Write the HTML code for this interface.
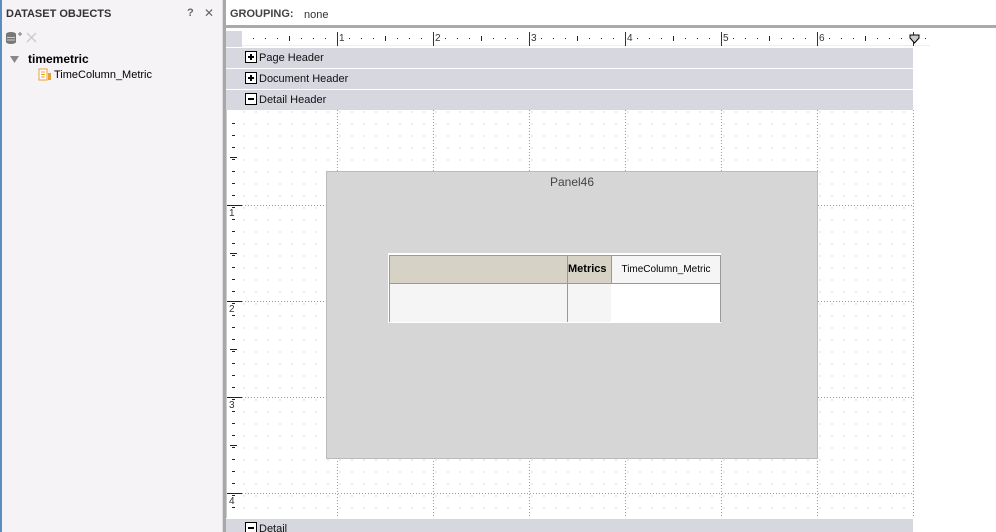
<!DOCTYPE html>
<html style="overflow:hidden;width:996px;height:532px"><head><style>
*{margin:0;padding:0;box-sizing:border-box}
body{width:996px;height:532px;position:relative;overflow:hidden;background:#fff;font-family:"Liberation Sans","DejaVu Sans",sans-serif;font-size:11px;color:#000}
.a{position:absolute}
.band{position:absolute;left:242px;width:671px;height:20px;background:#d6d7df}
.gut{position:absolute;left:226px;width:16px;height:20px;background:#d6d7df}
.bt{position:absolute;left:3px;top:3px;width:12px;height:12px;border:1px solid #000;background:#fff}
.bt:before{content:"";position:absolute;left:2px;top:4px;width:6px;height:2px;background:#000}
.bt.p:after{content:"";position:absolute;left:4px;top:2px;width:2px;height:6px;background:#000}
.bl{position:absolute;left:17px;top:3px;font-size:11px;color:#111}
.num{position:absolute;font-size:10px;color:#333}
</style></head><body>
<div class="a" style="left:0;top:0;width:222px;height:532px;background:#f6f3f6;border-left:2px solid #5a8ec0"></div>
<div class="a" style="left:6px;top:8px;font-weight:bold;font-size:11px;color:#333">DATASET OBJECTS</div>
<div class="a" style="left:187px;top:7px;font-weight:bold;color:#666;font-size:11px">?</div>
<div class="a" style="left:204px;top:6px;font-weight:bold;color:#666;font-size:12px">✕</div>
<svg class="a" style="left:4px;top:31px" width="36" height="14"><ellipse cx="7" cy="3" rx="5" ry="2" fill="#777"/><rect x="2" y="3" width="10" height="8" fill="#777"/><ellipse cx="7" cy="11" rx="5" ry="2" fill="#777"/><path d="M3 6.5h8M3 9h8" stroke="#ccc"/><path d="M14 3h4M16 1v4" stroke="#777"/><path d="M23 2l9 9M32 2l-9 9" stroke="#ccc" stroke-width="1.5"/></svg>
<svg class="a" style="left:10px;top:56px" width="10" height="8"><path d="M0 0h9l-4.5 7z" fill="#888"/></svg>
<div class="a" style="left:28px;top:52px;font-weight:bold;font-size:12px">timemetric</div>
<svg class="a" style="left:38px;top:68px" width="14" height="13"><rect x="1" y="1" width="8" height="11" fill="#fff" stroke="#e8a030"/><path d="M3 4h4M3 6.5h4M3 9h4" stroke="#e8a030"/><rect x="10" y="5" width="3" height="7" fill="#e8a030"/></svg>
<div class="a" style="left:54px;top:69px;font-size:11px">TimeColumn_Metric</div>
<div class="a" style="left:222px;top:0;width:4px;height:532px;background:#a8a8a8;border-left:1px solid #ddd"></div>
<div class="a" style="left:226px;top:0;width:770px;height:28px;background:#fff;border-bottom:3px solid #aaa"></div>
<div class="a" style="left:230px;top:8px;font-weight:bold;color:#444;font-size:11px">GROUPING:</div>
<div class="a" style="left:304px;top:9px;color:#333;font-size:11px">none</div>
<div class="a" style="left:226px;top:31px;width:16px;height:16px;background:#d6d7df"></div>
<div class="a" style="left:242px;top:32px;width:688px;height:14px;background:#fff;border-bottom:1px solid #eee">
 <div class="a" style="left:0;top:6px;width:688px;height:1px;background:repeating-linear-gradient(90deg,transparent 0 11px,#222 11px 12px)"></div>
 <div class="a" style="left:0;top:4px;width:688px;height:5px;background:repeating-linear-gradient(90deg,transparent 0 47px,#222 47px 48px)"></div>
 <div class="a" style="left:0;top:0;width:672px;height:14px;background:repeating-linear-gradient(90deg,transparent 0 95px,#333 95px 96px)"></div>
 <span class="num" style="left:97px;top:1px">1</span><span class="num" style="left:193px;top:1px">2</span><span class="num" style="left:289px;top:1px">3</span><span class="num" style="left:385px;top:1px">4</span><span class="num" style="left:481px;top:1px">5</span><span class="num" style="left:577px;top:1px">6</span>
 <svg class="a" style="left:667px;top:2px" width="11" height="10"><path d="M1 1h9v3l-4.5 5L1 4z" fill="#ccc" stroke="#000"/></svg>
</div>
<div class="gut" style="top:48px"></div><div class="band" style="top:48px"><div class="bt p"></div><div class="bl" style="top:4px">Page Header</div></div>
<div class="gut" style="top:69px"></div><div class="band" style="top:69px"><div class="bt p"></div><div class="bl" style="top:4px">Document Header</div></div>
<div class="gut" style="top:90px"></div><div class="band" style="top:90px"><div class="bt"></div><div class="bl" style="top:4px">Detail Header</div></div>
<div class="a" style="left:226px;top:110px;width:16px;height:408px;background:#fff;border-left:1px solid #ccc">
 <div class="a" style="left:5px;top:2px;width:3px;height:406px;background:repeating-linear-gradient(180deg,transparent 0 11px,#222 11px 12px)"></div>
 <div class="a" style="left:3px;top:0;width:7px;height:408px;background:repeating-linear-gradient(180deg,transparent 0 47px,#222 47px 48px)"></div>
 <div class="a" style="left:0;top:0;width:15px;height:408px;background:repeating-linear-gradient(180deg,transparent 0 95px,#222 95px 96px)"></div>
 <span class="num" style="left:2px;top:98px">1</span><span class="num" style="left:2px;top:194px">2</span><span class="num" style="left:2px;top:290px">3</span><span class="num" style="left:2px;top:386px">4</span>
</div>
<div class="a" style="left:242px;top:110px;width:671px;height:408px;background-image:radial-gradient(circle,#b8b8b8 0.6px,transparent 0.8px);background-size:12px 12px;background-position:-4px -4px"></div>
<div class="a" style="left:242px;top:110px;width:672px;height:408px;background-image:repeating-linear-gradient(90deg,transparent 0 95px,#999 95px 96px);-webkit-mask:repeating-linear-gradient(180deg,#000 0 1px,transparent 1px 3px);mask:repeating-linear-gradient(180deg,#000 0 1px,transparent 1px 3px)"></div>
<div class="a" style="left:242px;top:110px;width:671px;height:385px;background-image:repeating-linear-gradient(180deg,transparent 0 95px,#999 95px 96px);-webkit-mask:repeating-linear-gradient(90deg,#000 0 1px,transparent 1px 3px);mask:repeating-linear-gradient(90deg,#000 0 1px,transparent 1px 3px)"></div>
<div class="a" style="left:326px;top:171px;width:492px;height:288px;background:#d6d6d6;border:1px solid #bbb"></div>
<div class="a" style="left:326px;top:175px;width:492px;text-align:center;font-size:12px;color:#444">Panel46</div>
<div class="a" style="left:388px;top:253px;width:333px;height:70px;background:#fff"></div>
<div class="a" style="left:389px;top:255px;width:179px;height:29px;background:#d6d3c6;border:1px solid #999;border-right:none"></div>
<div class="a" style="left:567px;top:255px;width:45px;height:29px;background:#d6d3c6;border:1px solid #999;font-weight:bold;font-size:11px;line-height:27px">Metrics</div>
<div class="a" style="left:611px;top:255px;width:110px;height:29px;background:#f5f5f5;border:1px solid #999;font-size:10px;line-height:27px;text-align:center">TimeColumn_Metric</div>
<div class="a" style="left:389px;top:284px;width:179px;height:38px;background:#f5f5f5;border-left:1px solid #999;border-right:1px solid #999"></div>
<div class="a" style="left:567px;top:284px;width:45px;height:38px;background:#f5f5f5;border-left:1px solid #999;border-right:1px solid #999"></div>
<div class="a" style="left:611px;top:284px;width:110px;height:38px;background:#fff;border-right:1px solid #999"></div>
<div class="gut" style="top:519px;height:13px"></div><div class="band" style="top:519px;height:13px"><div class="bt"></div><div class="bl" style="top:4px">Detail</div></div>
</body></html>
